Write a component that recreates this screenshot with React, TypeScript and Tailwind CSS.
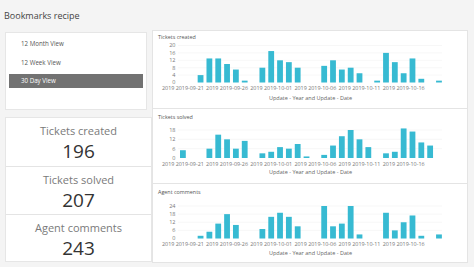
import React from "react";

const BAR = "#37bad2";
const FONT = "font-['Open_Sans','Noto_Sans',sans-serif]";

type ChartCfg = {
  title: string;
  panelH: string;
  titlePad: string;
  svgH: number;
  ticks: number[];
  top: number; // svg y of the highest tick
  base: number; // svg y of zero
  xLabelY: number;
  axisY: number;
  values: number[];
};

const dates = ["09-21", "09-26", "10-01", "10-06", "10-11", "10-16"];

const charts: ChartCfg[] = [
  {
    title: "Tickets created",
    panelH: "h-[78px]",
    titlePad: "pt-[2px]",
    svgH: 65,
    ticks: [0, 4, 8, 12, 16, 20],
    top: 2.5,
    base: 39.5,
    xLabelY: 46.6,
    axisY: 57,
    values: [0, 0, 4, 13, 13, 10, 7, 1, 0, 8, 17, 12, 11, 8, 0, 0, 9, 12, 7, 8, 5, 0, 1, 16, 11, 5, 13, 2, 0, 1],
  },
  {
    title: "Tickets solved",
    panelH: "h-[75px]",
    titlePad: "pt-[4px]",
    svgH: 62,
    ticks: [0, 6, 12, 18],
    top: 9,
    base: 37,
    xLabelY: 44.8,
    axisY: 52.7,
    values: [5, 0, 0, 6, 15, 12, 6, 11, 0, 3, 4, 7, 6, 9, 1, 0, 2, 8, 14, 18, 12, 7, 0, 3, 4, 19, 17, 10, 8, 0],
  },
  {
    title: "Agent comments",
    panelH: "h-[78px]",
    titlePad: "pt-[4px]",
    svgH: 65,
    ticks: [0, 6, 12, 18, 24],
    top: 9,
    base: 41.5,
    xLabelY: 49.2,
    axisY: 57.9,
    values: [0, 0, 2, 5, 11, 18, 10, 0, 0, 7, 16, 19, 16, 9, 0, 0, 24, 9, 11, 24, 3, 0, 0, 19, 6, 12, 17, 2, 0, 3],
  },
];

const X0 = 27;
const PITCH = 8.83;
const BW = 5.8;

function BarChart({ cfg }: { cfg: ChartCfg }) {
  const max = cfg.ticks[cfg.ticks.length - 1];
  const scale = (cfg.base - cfg.top) / max;
  return (
    <div className={`${cfg.panelH} flex flex-col bg-white border-b border-[#e4e4e4] last:border-b-0`}>
      <div className={`h-[13px] ${cfg.titlePad} pl-[5px] text-[5.4px] leading-[8px] text-[#555]`}>
        {cfg.title}
      </div>
      <svg width={316} height={cfg.svgH} className="block overflow-visible">
        {cfg.ticks.map((t) => {
          const y = cfg.base - t * scale;
          return (
            <g key={t}>
              {t > 0 && <line x1={25} x2={289} y1={y} y2={y} stroke="#f1f1f1" strokeWidth={0.6} />}
              <text x={22.5} y={y + 1.9} textAnchor="end" fontSize={5.5} fill="#777" fontFamily="Open Sans, sans-serif">
                {t}
              </text>
            </g>
          );
        })}
        {cfg.values.map((v, i) =>
          v > 0 ? (
            <rect key={i} x={X0 + i * PITCH} y={cfg.base - v * scale} width={BW} height={v * scale} fill={BAR} />
          ) : null
        )}
        {dates.map((d, k) => (
          <text
            key={d}
            x={X0 + k * 5 * PITCH + BW / 2}
            y={cfg.xLabelY}
            textAnchor="middle"
            fontSize={5.4}
            fill="#777"
            fontFamily="Open Sans, sans-serif"
          >
            {`2019 2019-${d}`}
          </text>
        ))}
        <text x={157.5} y={cfg.axisY} textAnchor="middle" fontSize={5.5} fill="#666" fontFamily="Open Sans, sans-serif">
          Update - Year and Update - Date
        </text>
      </svg>
    </div>
  );
}

function Stat({ label, value, h }: { label: string; value: string; h: string }) {
  return (
    <div className={`${h} flex flex-col items-center pt-[6px] border-b border-[#e4e4e4] last:border-b-0`}>
      <div className="h-[14px] leading-[14px] text-[11px] text-[#7a7a7a]">{label}</div>
      <div className="mt-[2px] leading-[22px] text-[19px] text-[#333]">{value}</div>
    </div>
  );
}

export default function App() {
  const views = ["12 Month View", "12 Week View", "30 Day View"];
  const selected = "30 Day View";
  return (
    <div className={`w-[474px] h-[267px] overflow-hidden bg-[#f4f4f4] ${FONT}`}>
      <div className="h-[30px] pl-[4px] pt-[9px] text-[9px] leading-[13px] text-[#444]">Bookmarks recipe</div>
      <div className="flex pl-[5px]">
        <div className="w-[147px] flex flex-col">
          <div className="w-[142px] h-[78px] mt-[2px] bg-white border border-[#e6e6e6] px-[3px] pt-[4px] flex flex-col gap-[4.5px]">
            {views.map((v) => (
              <div
                key={v}
                className={`h-[14px] pl-[12px] flex items-center text-[6.2px] ${
                  v === selected ? "bg-[#727272] text-white" : "text-[#555]"
                }`}
              >
                {v}
              </div>
            ))}
          </div>
          <div className="mt-[7px] h-[145px] bg-white border border-[#e6e6e6] flex flex-col">
            <Stat label="Tickets created" value="196" h="h-[49px]" />
            <Stat label="Tickets solved" value="207" h="h-[48px]" />
            <Stat label="Agent comments" value="243" h="h-[46px]" />
          </div>
        </div>
        <div className="w-[316px] flex flex-col border border-[#e4e4e4] bg-white">
          {charts.map((c) => (
            <BarChart key={c.title} cfg={c} />
          ))}
        </div>
      </div>
    </div>
  );
}
